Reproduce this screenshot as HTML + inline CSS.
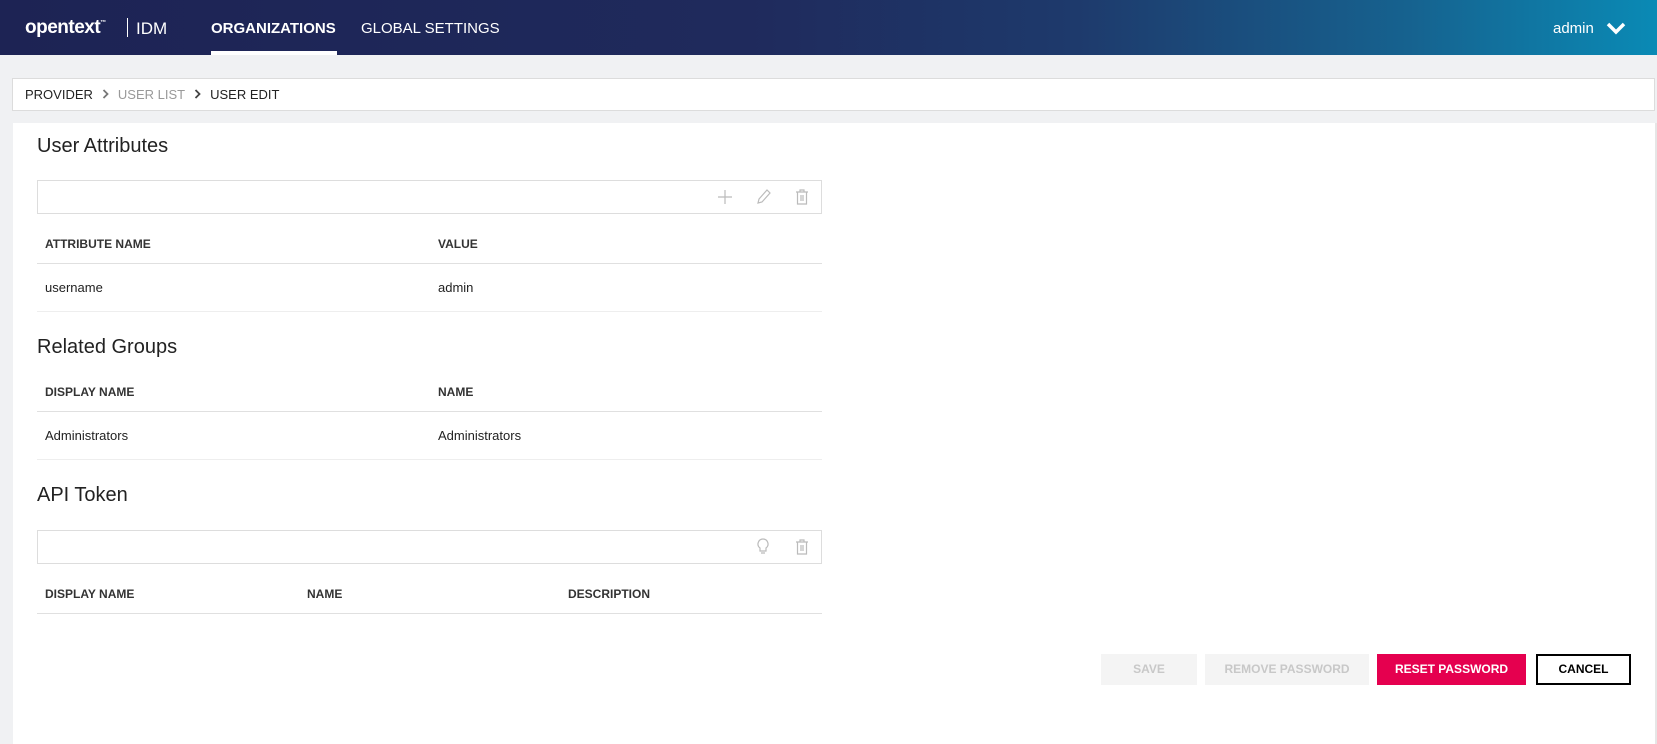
<!DOCTYPE html>
<html><head><meta charset="utf-8"><style>
*{box-sizing:border-box;margin:0;padding:0}
body{width:1657px;height:744px;overflow:hidden;background:#f0f1f3;font-family:"Liberation Sans",Arial,sans-serif;color:#222;position:relative}
.hdr{position:absolute;left:0;top:0;width:1657px;height:55px;background:linear-gradient(90deg,#1d2354 0%,#1f2a5c 45%,#1e3a6c 65%,#16628f 85%,#0a8ab5 100%);color:#fff}
.hdr .t{position:absolute;top:0;line-height:57px;white-space:nowrap}
.bc{position:absolute;left:12px;top:78px;width:1643px;height:33px;background:#fff;border:1px solid #dcdcdc;font-size:13px;line-height:31px;padding-left:12px}
.panel{position:absolute;left:13px;top:123px;width:1642px;height:621px;background:#fff}
.a{position:absolute;white-space:nowrap}
h2{position:absolute;font-weight:normal;font-size:20px;left:37px;white-space:nowrap}
.tb{position:absolute;left:37px;width:785px;height:34px;border:1px solid #ddd}
.th{position:absolute;font-size:12px;font-weight:bold;color:#333}
.td{position:absolute;font-size:13px;color:#222}
.ln{position:absolute;left:37px;width:785px;height:1px;background:#e0e0e0}
.btn{position:absolute;top:654px;height:31px;font-size:12px;font-weight:bold;text-align:center;line-height:31px}
.chev{display:inline-block;margin:0 9px;vertical-align:0}
</style></head><body>
<div class="hdr">
<div class="t" style="left:25px;top:-5px;font-size:19px;font-weight:bold;letter-spacing:-0.5px">opentext<sup style="font-size:6px;vertical-align:9px">™</sup></div>
<div style="position:absolute;left:127px;top:18px;width:1px;height:19px;background:#fff"></div>
<div class="t" style="left:136px;font-size:17px">IDM</div>
<div class="t" style="left:211px;font-size:15px;font-weight:bold">ORGANIZATIONS</div>
<div style="position:absolute;left:211px;top:51px;width:126px;height:4px;background:#fff"></div>
<div class="t" style="left:361px;font-size:15px">GLOBAL SETTINGS</div>
<div class="t" style="left:1553px;font-size:15px">admin</div>
<svg style="position:absolute;left:1606px;top:21px" width="20" height="14" viewBox="0 0 20 14"><path d="M2 3l8 8 8-8" stroke="#fff" stroke-width="3.5" fill="none"/></svg>
</div>
<div class="bc">PROVIDER<svg class="chev" width="7" height="10"><path d="M1.5 1l4 4-4 4" stroke="#777" stroke-width="1.8" fill="none"/></svg><span style="color:#999">USER LIST</span><svg class="chev" width="7" height="10"><path d="M1.5 1l4 4-4 4" stroke="#444" stroke-width="1.8" fill="none"/></svg>USER EDIT</div>
<div class="panel"></div>
<div style="position:absolute;left:1655px;top:123px;width:2px;height:621px;background:#e6e6e6"></div>

<h2 style="top:135px">User Attributes</h2>
<div class="tb" style="top:180px"></div>
<svg class="a" style="left:717px;top:189px" width="16" height="16"><path d="M8 1v14M1 8h14" stroke="#bbb" stroke-width="1.2"/></svg>
<svg class="a" style="left:755px;top:188px" width="16" height="18"><path d="M3 15l1-4 8-9 3 3-8 9z" stroke="#bbb" stroke-width="1.2" fill="none"/></svg>
<svg class="a" style="left:795px;top:188px" width="14" height="18"><path d="M1 4h12M5 4V2h4v2M2.5 4v12h9V4M6 7v6M8 7v6" stroke="#bbb" stroke-width="1.2" fill="none"/></svg>
<div class="th" style="left:45px;top:237px">ATTRIBUTE NAME</div>
<div class="th" style="left:438px;top:237px">VALUE</div>
<div class="ln" style="top:263px"></div>
<div class="td" style="left:45px;top:280px">username</div>
<div class="td" style="left:438px;top:280px">admin</div>
<div class="ln" style="top:311px;background:#eee"></div>

<h2 style="top:336px">Related Groups</h2>
<div class="th" style="left:45px;top:385px">DISPLAY NAME</div>
<div class="th" style="left:438px;top:385px">NAME</div>
<div class="ln" style="top:411px"></div>
<div class="td" style="left:45px;top:428px">Administrators</div>
<div class="td" style="left:438px;top:428px">Administrators</div>
<div class="ln" style="top:459px;background:#eee"></div>

<h2 style="top:484px">API Token</h2>
<div class="tb" style="top:530px"></div>
<svg class="a" style="left:756px;top:538px" width="14" height="18"><path d="M7 1a5 5 0 0 0-3 9v3h6v-3a5 5 0 0 0-3-9zM5 15h4" stroke="#bbb" stroke-width="1.2" fill="none"/></svg>
<svg class="a" style="left:795px;top:538px" width="14" height="18"><path d="M1 4h12M5 4V2h4v2M2.5 4v12h9V4M6 7v6M8 7v6" stroke="#bbb" stroke-width="1.2" fill="none"/></svg>
<div class="th" style="left:45px;top:587px">DISPLAY NAME</div>
<div class="th" style="left:307px;top:587px">NAME</div>
<div class="th" style="left:568px;top:587px">DESCRIPTION</div>
<div class="ln" style="top:613px"></div>

<div class="btn" style="left:1101px;width:96px;background:#f4f4f4;color:#c8c8c8">SAVE</div>
<div class="btn" style="left:1205px;width:164px;background:#f4f4f4;color:#c8c8c8">REMOVE PASSWORD</div>
<div class="btn" style="left:1377px;width:149px;background:#e5004f;color:#fff">RESET PASSWORD</div>
<div class="btn" style="left:1536px;width:95px;border:2px solid #000;line-height:27px;color:#000">CANCEL</div>
</body></html>
